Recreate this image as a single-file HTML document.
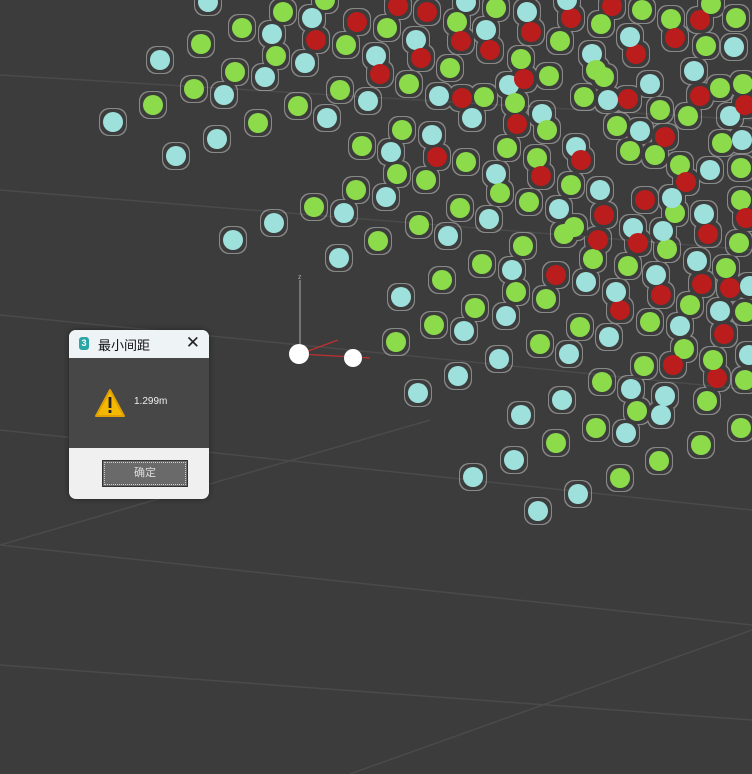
<!DOCTYPE html>
<html><head><meta charset="utf-8"><style>
body{margin:0;width:752px;height:774px;background:#3c3c3c;overflow:hidden;position:relative;font-family:"Liberation Sans","Noto Sans CJK SC",sans-serif}
svg{position:absolute;left:0;top:0}
.g{fill:#8cdb4c}.c{fill:#9ee0dc}.r{fill:#bb1c1c}
.dlg{position:absolute;left:69px;top:330px;width:140px;height:169px;border-radius:7px;overflow:hidden;background:#f0f0f0;box-shadow:0 0 6px rgba(0,0,0,.4)}
.tb{height:28px;background:#eef3f6;position:relative}
.tb .ic{position:absolute;left:10px;top:7px;width:10px;height:13px;background:#2aa6a6;border-radius:3px;color:#fff;font-size:9px;text-align:center;line-height:13px;font-weight:bold}
.tb .t{position:absolute;left:29px;top:5px;font-size:13px;color:#111}
.tb .x{position:absolute;right:9px;top:3px;font-size:17px;color:#222}
.bd{height:90px;background:#474747;position:relative}
.bd .m{position:absolute;left:65px;top:38px;font-size:10px;color:#eee}
.btn{position:absolute;left:33px;top:130px;width:86px;height:27px;background:#6a6a6a;border:1px solid #333;box-sizing:border-box;outline:1px dotted #ccc;outline-offset:-3px;color:#ddd;font-size:11px;text-align:center;line-height:25px}
</style></head><body>
<svg width="752" height="774">
<defs>
<filter id="ol" x="-5%" y="-5%" width="110%" height="110%">
<feMorphology in="SourceAlpha" operator="dilate" radius="4" result="a"/>
<feMorphology in="SourceAlpha" operator="dilate" radius="3" result="b"/>
<feComposite in="a" in2="b" operator="out" result="ring"/>
<feFlood flood-color="#fff" flood-opacity="0.4"/>
<feComposite in2="ring" operator="in" result="w"/>
<feMerge><feMergeNode in="w"/><feMergeNode in="SourceGraphic"/></feMerge>
</filter>
</defs>
<g stroke="#4a4a4a" stroke-width="1.5" fill="none">
<line x1="0" y1="190" x2="752" y2="250"/><line x1="0" y1="315" x2="752" y2="390"/><line x1="0" y1="430" x2="752" y2="510"/>
<line x1="0" y1="545" x2="752" y2="625"/><line x1="0" y1="665" x2="752" y2="720"/><line x1="0" y1="75" x2="752" y2="120"/>
<line x1="0" y1="545" x2="430" y2="420"/><line x1="350" y1="774" x2="752" y2="630"/>
</g>
<g id="cs" filter="url(#ol)">
<circle class="c" cx="208" cy="2" r="10"/><circle class="g" cx="242" cy="28" r="10"/><circle class="c" cx="272" cy="34" r="10"/><circle class="g" cx="283" cy="12" r="10"/><circle class="c" cx="312" cy="18" r="10"/><circle class="g" cx="325" cy="0" r="10"/><circle class="g" cx="201" cy="44" r="10"/><circle class="c" cx="160" cy="60" r="10"/><circle class="g" cx="235" cy="72" r="10"/><circle class="c" cx="265" cy="77" r="10"/><circle class="g" cx="276" cy="56" r="10"/><circle class="c" cx="305" cy="63" r="10"/><circle class="g" cx="194" cy="89" r="10"/><circle class="c" cx="224" cy="95" r="10"/><circle class="g" cx="153" cy="105" r="10"/><circle class="c" cx="113" cy="122" r="10"/><circle class="g" cx="258" cy="123" r="10"/><circle class="c" cx="217" cy="139" r="10"/><circle class="c" cx="176" cy="156" r="10"/><circle class="g" cx="298" cy="106" r="10"/><circle class="c" cx="327" cy="118" r="10"/><circle class="g" cx="340" cy="90" r="10"/><circle class="c" cx="368" cy="101" r="10"/><circle class="g" cx="346" cy="45" r="10"/><circle class="r" cx="316" cy="40" r="10"/><circle class="c" cx="376" cy="56" r="10"/><circle class="r" cx="357" cy="22" r="10"/><circle class="g" cx="387" cy="28" r="10"/><circle class="r" cx="398" cy="6" r="10"/><circle class="g" cx="409" cy="84" r="10"/><circle class="r" cx="380" cy="74" r="10"/><circle class="c" cx="416" cy="40" r="10"/><circle class="r" cx="421" cy="58" r="10"/><circle class="g" cx="450" cy="68" r="10"/><circle class="c" cx="439" cy="96" r="10"/><circle class="r" cx="427" cy="12" r="10"/><circle class="g" cx="457" cy="22" r="10"/><circle class="c" cx="486" cy="30" r="10"/><circle class="r" cx="461" cy="41" r="10"/><circle class="g" cx="496" cy="8" r="10"/><circle class="r" cx="490" cy="50" r="10"/><circle class="c" cx="466" cy="2" r="10"/>
<circle class="g" cx="362" cy="146" r="10"/><circle class="c" cx="391" cy="152" r="10"/><circle class="g" cx="402" cy="130" r="10"/><circle class="c" cx="432" cy="135" r="10"/><circle class="r" cx="437" cy="157" r="10"/><circle class="g" cx="466" cy="162" r="10"/><circle class="c" cx="472" cy="118" r="10"/><circle class="r" cx="462" cy="98" r="10"/><circle class="g" cx="484" cy="97" r="10"/><circle class="c" cx="509" cy="85" r="10"/><circle class="g" cx="515" cy="103" r="10"/><circle class="r" cx="524" cy="79" r="10"/><circle class="g" cx="549" cy="76" r="10"/><circle class="c" cx="542" cy="114" r="10"/><circle class="r" cx="517" cy="124" r="10"/><circle class="g" cx="547" cy="130" r="10"/><circle class="g" cx="560" cy="41" r="10"/><circle class="r" cx="531" cy="32" r="10"/><circle class="c" cx="527" cy="12" r="10"/><circle class="g" cx="521" cy="59" r="10"/><circle class="r" cx="571" cy="18" r="10"/><circle class="c" cx="567" cy="0" r="10"/><circle class="g" cx="601" cy="24" r="10"/>
<circle class="g" cx="356" cy="190" r="10"/><circle class="c" cx="386" cy="197" r="10"/><circle class="g" cx="397" cy="174" r="10"/><circle class="g" cx="426" cy="180" r="10"/><circle class="c" cx="496" cy="174" r="10"/><circle class="g" cx="500" cy="193" r="10"/><circle class="g" cx="507" cy="148" r="10"/><circle class="g" cx="537" cy="158" r="10"/><circle class="r" cx="541" cy="176" r="10"/><circle class="g" cx="571" cy="185" r="10"/><circle class="c" cx="576" cy="147" r="10"/><circle class="r" cx="581" cy="160" r="10"/><circle class="g" cx="584" cy="97" r="10"/><circle class="c" cx="608" cy="100" r="10"/><circle class="g" cx="617" cy="126" r="10"/><circle class="r" cx="628" cy="99" r="10"/><circle class="g" cx="604" cy="77" r="10"/><circle class="c" cx="592" cy="54" r="10"/><circle class="g" cx="596" cy="70" r="10"/><circle class="r" cx="636" cy="54" r="10"/><circle class="c" cx="630" cy="37" r="10"/><circle class="g" cx="642" cy="10" r="10"/><circle class="r" cx="612" cy="6" r="10"/>
<circle class="g" cx="314" cy="207" r="10"/><circle class="c" cx="344" cy="213" r="10"/><circle class="c" cx="274" cy="223" r="10"/><circle class="c" cx="233" cy="240" r="10"/><circle class="g" cx="378" cy="241" r="10"/><circle class="g" cx="419" cy="225" r="10"/><circle class="c" cx="448" cy="236" r="10"/><circle class="g" cx="460" cy="208" r="10"/><circle class="c" cx="489" cy="219" r="10"/><circle class="g" cx="529" cy="202" r="10"/><circle class="c" cx="559" cy="209" r="10"/><circle class="g" cx="564" cy="234" r="10"/><circle class="g" cx="523" cy="246" r="10"/><circle class="c" cx="512" cy="270" r="10"/><circle class="g" cx="482" cy="264" r="10"/><circle class="g" cx="442" cy="280" r="10"/><circle class="c" cx="339" cy="258" r="10"/><circle class="c" cx="401" cy="297" r="10"/><circle class="g" cx="475" cy="308" r="10"/><circle class="g" cx="516" cy="292" r="10"/><circle class="g" cx="546" cy="299" r="10"/><circle class="r" cx="556" cy="275" r="10"/><circle class="g" cx="593" cy="259" r="10"/><circle class="r" cx="598" cy="240" r="10"/><circle class="g" cx="628" cy="266" r="10"/><circle class="c" cx="633" cy="228" r="10"/><circle class="r" cx="604" cy="215" r="10"/><circle class="c" cx="600" cy="190" r="10"/><circle class="g" cx="574" cy="227" r="10"/><circle class="c" cx="586" cy="282" r="10"/>
<circle class="g" cx="396" cy="342" r="10"/><circle class="g" cx="434" cy="325" r="10"/><circle class="c" cx="464" cy="331" r="10"/><circle class="c" cx="506" cy="316" r="10"/><circle class="g" cx="540" cy="344" r="10"/><circle class="c" cx="499" cy="359" r="10"/><circle class="c" cx="569" cy="354" r="10"/><circle class="g" cx="580" cy="327" r="10"/><circle class="r" cx="620" cy="310" r="10"/><circle class="c" cx="616" cy="292" r="10"/><circle class="g" cx="650" cy="322" r="10"/><circle class="c" cx="609" cy="337" r="10"/><circle class="r" cx="638" cy="243" r="10"/><circle class="c" cx="656" cy="275" r="10"/><circle class="g" cx="667" cy="249" r="10"/><circle class="r" cx="661" cy="295" r="10"/><circle class="g" cx="690" cy="305" r="10"/><circle class="c" cx="680" cy="326" r="10"/><circle class="g" cx="684" cy="349" r="10"/>
<circle class="c" cx="458" cy="376" r="10"/><circle class="c" cx="418" cy="393" r="10"/><circle class="g" cx="602" cy="382" r="10"/><circle class="c" cx="631" cy="389" r="10"/><circle class="g" cx="644" cy="366" r="10"/><circle class="r" cx="673" cy="365" r="10"/><circle class="c" cx="665" cy="396" r="10"/><circle class="g" cx="637" cy="411" r="10"/><circle class="g" cx="707" cy="401" r="10"/><circle class="c" cx="661" cy="415" r="10"/><circle class="c" cx="626" cy="433" r="10"/><circle class="g" cx="596" cy="428" r="10"/><circle class="c" cx="562" cy="400" r="10"/><circle class="c" cx="521" cy="415" r="10"/><circle class="g" cx="556" cy="443" r="10"/><circle class="c" cx="514" cy="460" r="10"/><circle class="g" cx="659" cy="461" r="10"/><circle class="c" cx="473" cy="477" r="10"/><circle class="g" cx="620" cy="478" r="10"/><circle class="c" cx="578" cy="494" r="10"/><circle class="c" cx="538" cy="511" r="10"/><circle class="g" cx="701" cy="445" r="10"/><circle class="g" cx="741" cy="428" r="10"/><circle class="r" cx="717" cy="378" r="10"/><circle class="g" cx="713" cy="360" r="10"/><circle class="c" cx="720" cy="311" r="10"/><circle class="r" cx="724" cy="334" r="10"/><circle class="g" cx="745" cy="312" r="10"/><circle class="c" cx="750" cy="286" r="10"/><circle class="r" cx="730" cy="288" r="10"/><circle class="r" cx="702" cy="284" r="10"/><circle class="c" cx="697" cy="261" r="10"/><circle class="g" cx="739" cy="243" r="10"/><circle class="r" cx="708" cy="234" r="10"/><circle class="c" cx="704" cy="214" r="10"/><circle class="g" cx="741" cy="200" r="10"/><circle class="r" cx="746" cy="218" r="10"/><circle class="g" cx="675" cy="213" r="10"/><circle class="c" cx="663" cy="231" r="10"/><circle class="g" cx="726" cy="268" r="10"/><circle class="g" cx="745" cy="380" r="10"/><circle class="c" cx="749" cy="355" r="10"/>
<circle class="g" cx="630" cy="151" r="10"/><circle class="c" cx="640" cy="131" r="10"/><circle class="r" cx="665" cy="137" r="10"/><circle class="g" cx="680" cy="165" r="10"/><circle class="c" cx="710" cy="170" r="10"/><circle class="r" cx="686" cy="182" r="10"/><circle class="g" cx="655" cy="155" r="10"/><circle class="r" cx="645" cy="200" r="10"/><circle class="c" cx="672" cy="198" r="10"/><circle class="g" cx="722" cy="143" r="10"/><circle class="c" cx="730" cy="116" r="10"/><circle class="r" cx="700" cy="96" r="10"/><circle class="g" cx="688" cy="116" r="10"/><circle class="c" cx="694" cy="71" r="10"/><circle class="g" cx="706" cy="46" r="10"/><circle class="c" cx="734" cy="47" r="10"/><circle class="g" cx="736" cy="18" r="10"/><circle class="r" cx="700" cy="20" r="10"/><circle class="g" cx="671" cy="19" r="10"/><circle class="g" cx="660" cy="110" r="10"/><circle class="c" cx="650" cy="84" r="10"/><circle class="g" cx="720" cy="88" r="10"/><circle class="g" cx="743" cy="84" r="10"/><circle class="r" cx="745" cy="105" r="10"/><circle class="c" cx="742" cy="140" r="10"/><circle class="g" cx="741" cy="168" r="10"/><circle class="r" cx="675" cy="38" r="10"/><circle class="g" cx="711" cy="4" r="10"/>
</g>
<line x1="300" y1="280" x2="300" y2="350" stroke="#aaa" stroke-width="1"/>
<line x1="300" y1="354" x2="338" y2="340" stroke="#c03030" stroke-width="1.2"/>
<line x1="300" y1="354" x2="370" y2="358" stroke="#c03030" stroke-width="1.2"/>
<circle cx="299" cy="354" r="10" fill="#fff"/><circle cx="353" cy="358" r="9" fill="#fff"/>
<text x="298" y="279" fill="#aaa" font-size="7" font-family="Liberation Sans">z</text>
</svg>
<div class="dlg">
<div class="tb"><div class="ic">3</div><div class="t">最小间距</div><div class="x">✕</div></div>
<div class="bd">
<svg width="32" height="30" style="left:25px;top:30px"><path d="M16 2 L30 28 L2 28 Z" fill="#f5b800" stroke="#e0a000" stroke-linejoin="round" stroke-width="2"/><rect x="14.6" y="9" width="2.8" height="11" fill="#222"/><rect x="14.6" y="22" width="2.8" height="3" fill="#222"/></svg>
<div class="m">1.299m</div>
</div>
<div class="btn">确定</div>
</div>
</body></html>
